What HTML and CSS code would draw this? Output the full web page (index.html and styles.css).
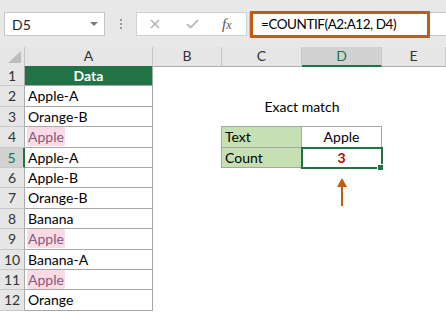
FILE: index.html
```html
<!doctype html>
<html>
  <head>
    <title>COUNTIF exact match</title>
    <link rel="stylesheet" href="styles.css">
  </head>
  <body>
    <div class="toolbar">
      <div class="namebox">
        <span>D5</span>
        <span class="caret"></span>
      </div>
      <div class="grip"><i></i><i></i><i></i></div>
      <div class="fx-buttons">
        <svg class="cancel" width="10" height="10" viewBox="0 0 10 10">
          <path d="M1 1L9 9M9 1L1 9" stroke="#b4b4b4" stroke-width="1.6" fill="none" />
        </svg>
        <svg class="enter" width="13" height="10" viewBox="0 0 13 10">
          <path d="M1 5.2L4.6 8.6L12 1.2" stroke="#b8b8b8" stroke-width="1.8" fill="none" />
        </svg>
        <span class="fx">f<span class="fx-x">x</span></span>
      </div>
      <div class="formula">
        <div class="formula-text">=COUNTIF(A2:A12, D4)</div>
      </div>
    </div>

    <div class="colheads">
      <div class="corner">
        <svg width="13" height="12" viewBox="0 0 13 12">
          <polygon points="13,0 13,12 0,12" fill="#bdbdbd" />
        </svg>
      </div>
      <div class="colhead">A</div>
      <div class="colhead">B</div>
      <div class="colhead">C</div>
      <div class="colhead selected">D</div>
      <div class="colhead">E</div>
    </div>

    <div class="sheet">
      <div class="rowhead">1</div><div class="cell head">Data</div>
      <div class="rowhead">2</div><div class="cell">Apple-A</div>
      <div class="rowhead">3</div><div class="cell">Orange-B</div>
      <div class="rowhead">4</div><div class="cell"><span class="match">Apple</span></div>
      <div class="rowhead selected">5</div><div class="cell">Apple-A</div>
      <div class="rowhead">6</div><div class="cell">Apple-B</div>
      <div class="rowhead">7</div><div class="cell">Orange-B</div>
      <div class="rowhead">8</div><div class="cell">Banana</div>
      <div class="rowhead">9</div><div class="cell"><span class="match">Apple</span></div>
      <div class="rowhead">10</div><div class="cell">Banana-A</div>
      <div class="rowhead">11</div><div class="cell"><span class="match">Apple</span></div>
      <div class="rowhead">12</div><div class="cell">Orange</div>

      <div class="title">Exact match</div>
      <div class="tcell label row-4">Text</div>
      <div class="tcell value row-4">Apple</div>
      <div class="tcell label row-5">Count</div>
      <div class="tcell value row-5 active">3<span class="handle"></span></div>
      <svg class="arrow" width="12" height="28" viewBox="0 0 12 28">
        <polygon points="6,0 11,9 1,9" fill="#c55a11" />
        <rect x="5" y="8" width="2" height="20" fill="#c55a11" />
      </svg>
    </div>
  </body>
</html>
```

FILE: styles.css
```css
body {
  margin: 0;
  width: 446px;
  height: 312px;
  overflow: hidden;
  background: #fff;
  font-family: Lato, "Open Sans", sans-serif;
  font-size: 14px;
  color: #000;
}

/* formula bar */
.toolbar {
  height: 47px;
  box-sizing: border-box;
  background: #e8e8e8;
  display: flex;
  align-items: flex-start;
  padding: 12px 0 0 4px;
}
.namebox {
  width: 101px;
  height: 24px;
  box-sizing: border-box;
  background: #fff;
  border: 1px solid #c6c6c6;
  display: flex;
  align-items: center;
  justify-content: space-between;
  padding: 0 6px 0 7px;
  color: #222;
}
.caret {
  border-left: 4px solid transparent;
  border-right: 4px solid transparent;
  border-top: 4px solid #7a7a7a;
}
.grip {
  width: 31px;
  display: flex;
  flex-direction: column;
  align-items: center;
  gap: 2px;
  padding-top: 7px;
}
.grip i {
  width: 2px;
  height: 2px;
  background: #9a9a9a;
}
.fx-buttons {
  width: 111px;
  height: 24px;
  box-sizing: border-box;
  background: #fff;
  border: 1px solid #d0d0d0;
  display: flex;
  align-items: center;
}
.cancel {
  margin-left: 13px;
}
.enter {
  margin-left: 26px;
}
.fx {
  margin-left: 23px;
  font-family: "Liberation Serif", serif;
  font-style: italic;
  font-size: 15px;
  color: #555;
}
.fx-x {
  font-size: 12px;
}
.formula {
  flex: 1;
  margin-left: 2px;
  height: 24px;
  box-sizing: border-box;
  background: #fff;
  border: 1px solid #c6c6c6;
  border-right: 0;
  display: flex;
  align-items: center;
}
.formula-text {
  flex-shrink: 0;
  width: 180px;
  height: 27px;
  box-sizing: border-box;
  border: 3px solid #c55a11;
  display: flex;
  align-items: center;
  padding-left: 8px;
  font-size: 13.5px;
  letter-spacing: -0.45px;
  white-space: nowrap;
}

/* column headers */
.colheads {
  display: grid;
  grid-template-columns: 25px 128px 69px 80px 80px 64px;
  height: 19px;
  background: #e6e6e6;
}
.corner,
.colhead {
  box-sizing: border-box;
  border-right: 1px solid #c8c8c8;
  border-bottom: 1px solid #ababab;
}
.corner {
  display: flex;
  align-items: flex-end;
  justify-content: flex-end;
  padding: 0 3px 3px 0;
}
.colhead {
  text-align: center;
  line-height: 18px;
  color: #333;
}
.colhead.selected {
  background: #d2d2d2;
  border-bottom: 2px solid #217346;
  color: #217346;
}

/* grid */
.sheet {
  display: grid;
  grid-template-columns: 25px 128px 69px 80px 80px 64px;
  grid-template-rows: repeat(12, 20.4px);
}
.rowhead {
  grid-column: 1;
  box-sizing: border-box;
  background: #e6e6e6;
  border-right: 1px solid #ababab;
  border-bottom: 1px solid #c8c8c8;
  text-align: center;
  line-height: 19px;
  color: #333;
}
.rowhead.selected {
  background: #d2d2d2;
  border-right: 2px solid #217346;
  color: #217346;
}
.cell {
  grid-column: 2;
  box-sizing: border-box;
  border-right: 1px solid #a6a6a6;
  border-bottom: 1px solid #a6a6a6;
  padding-left: 3px;
  line-height: 19px;
  white-space: nowrap;
}
.cell.head {
  background: #217346;
  color: #fff;
  font-weight: bold;
  text-align: center;
  padding-left: 0;
}
.match {
  background: #fadbe5;
  color: #86597c;
  border-radius: 2px;
  padding: 1px 1px;
  margin-left: -1px;
}

.title {
  grid-row: 2 / 4;
  grid-column: 4 / 6;
  align-self: center;
  text-align: center;
}
.tcell {
  box-sizing: border-box;
  border-right: 1px solid #a6a6a6;
  border-bottom: 1px solid #a6a6a6;
  line-height: 19px;
}
.row-4 {
  grid-row: 4;
  border-top: 1px solid #a6a6a6;
  margin-top: -1px;
}
.row-5 {
  grid-row: 5;
}
.label {
  grid-column: 4;
  background: #c6e0b4;
  border-left: 1px solid #a6a6a6;
  margin-left: -1px;
  padding-left: 3px;
}
.value {
  grid-column: 5;
  text-align: center;
}
.active {
  position: relative;
  outline: 2px solid #217346;
  outline-offset: -1px;
  color: #c00000;
  font-weight: bold;
}
.handle {
  position: absolute;
  right: -3px;
  bottom: -4px;
  width: 5px;
  height: 5px;
  background: #217346;
  border: 1px solid #fff;
}
.arrow {
  grid-row: 6 / 8;
  grid-column: 5;
  justify-self: center;
  margin-top: 10px;
}
```
